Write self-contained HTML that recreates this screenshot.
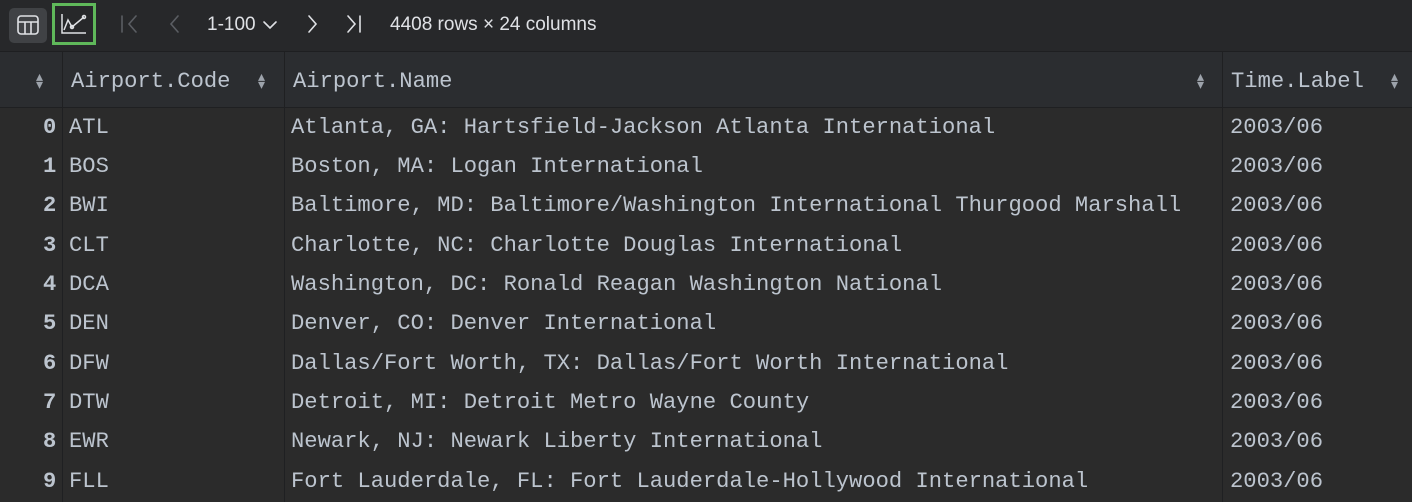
<!DOCTYPE html>
<html><head><style>
body{margin:0;width:1412px;height:502px;overflow:hidden;background:#2b2b2b;font-family:"Liberation Mono",monospace;color:#bcc4ce}
.tb{position:absolute;left:0;top:0;width:1412px;height:51px;background:#27282a;border-bottom:1px solid #1e1f21}
.tt{position:absolute;font-family:"Liberation Sans",sans-serif;font-size:19px;color:#dfe1e5;top:14px}
.hd{position:absolute;top:52px;left:0;width:1412px;height:55px;background:#2b2d30;border-bottom:1px solid #1f2022}
.vl{position:absolute;width:1px;background:#1f2022;top:52px;height:450px}
.t{position:absolute;font-size:22.15px;white-space:pre;line-height:24px}
.s{position:absolute;font-size:14px;color:#9da3ab;font-family:"DejaVu Sans",sans-serif;line-height:8px}
</style></head><body>
<div class="tb"></div>
<div style="position:absolute;left:9px;top:8px;width:38px;height:35px;border-radius:5px;background:#404245"></div>
<svg style="position:absolute;left:16px;top:14px" width="24" height="22" viewBox="0 0 24 22" fill="none" stroke="#dfe1e5" stroke-width="1.6"><rect x="2" y="2" width="20" height="18" rx="3"/><line x1="2" y1="8" x2="22" y2="8"/><line x1="9" y1="8" x2="9" y2="20"/><line x1="15" y1="8" x2="15" y2="20"/></svg>
<div style="position:absolute;left:52px;top:3px;width:44px;height:42px;border:3px solid #5fb85a;box-sizing:border-box"></div>
<svg style="position:absolute;left:60px;top:12px" width="28" height="24" viewBox="0 0 28 24" fill="none" stroke="#dfe1e5" stroke-width="1.5"><path d="M2 2V21H26"/><path d="M4 18L8 8L12 15L18 10L24 5"/><circle cx="12" cy="15" r="1.5"/><circle cx="24" cy="5" r="1.5"/></svg>
<svg style="position:absolute;left:118px;top:12px" width="260" height="24" viewBox="0 0 260 24" fill="none" stroke-width="1.6" stroke-linecap="round"><path d="M4 4V20M18 4L11 12L18 20" stroke="#5b5e63"/><path d="M60 4L53 12L60 20" stroke="#5b5e63"/><path d="M146 10L152 16L158 10" stroke="#dfe1e5"/><path d="M191 4L198 12L191 20" stroke="#dfe1e5"/><path d="M230 4L237 12L230 20M242 4V20" stroke="#dfe1e5"/></svg>
<div class="tt" style="left:207px">1-100</div>
<div class="tt" style="left:390px">4408 rows × 24 columns</div>
<div class="hd"></div>
<div class="vl" style="left:62px"></div><div class="vl" style="left:284px"></div><div class="vl" style="left:1222px"></div>
<div class="s" style="left:36px;top:73px">▴<br>▾</div>
<div class="t" style="left:71px;top:70px">Airport.Code</div>
<div class="s" style="left:258px;top:73px">▴<br>▾</div>
<div class="t" style="left:293px;top:70px">Airport.Name</div>
<div class="s" style="left:1197px;top:73px">▴<br>▾</div>
<div class="t" style="left:1231px;top:70px">Time.Label</div>
<div class="s" style="left:1391px;top:73px">▴<br>▾</div>
<div class="t" style="left:43px;top:116px;font-weight:bold">0</div><div class="t" style="left:69px;top:116px">ATL</div><div class="t" style="left:291px;top:116px">Atlanta, GA: Hartsfield-Jackson Atlanta International</div><div class="t" style="left:1230px;top:116px">2003/06</div>
<div class="t" style="left:43px;top:155px;font-weight:bold">1</div><div class="t" style="left:69px;top:155px">BOS</div><div class="t" style="left:291px;top:155px">Boston, MA: Logan International</div><div class="t" style="left:1230px;top:155px">2003/06</div>
<div class="t" style="left:43px;top:194px;font-weight:bold">2</div><div class="t" style="left:69px;top:194px">BWI</div><div class="t" style="left:291px;top:194px">Baltimore, MD: Baltimore/Washington International Thurgood Marshall</div><div class="t" style="left:1230px;top:194px">2003/06</div>
<div class="t" style="left:43px;top:234px;font-weight:bold">3</div><div class="t" style="left:69px;top:234px">CLT</div><div class="t" style="left:291px;top:234px">Charlotte, NC: Charlotte Douglas International</div><div class="t" style="left:1230px;top:234px">2003/06</div>
<div class="t" style="left:43px;top:273px;font-weight:bold">4</div><div class="t" style="left:69px;top:273px">DCA</div><div class="t" style="left:291px;top:273px">Washington, DC: Ronald Reagan Washington National</div><div class="t" style="left:1230px;top:273px">2003/06</div>
<div class="t" style="left:43px;top:312px;font-weight:bold">5</div><div class="t" style="left:69px;top:312px">DEN</div><div class="t" style="left:291px;top:312px">Denver, CO: Denver International</div><div class="t" style="left:1230px;top:312px">2003/06</div>
<div class="t" style="left:43px;top:352px;font-weight:bold">6</div><div class="t" style="left:69px;top:352px">DFW</div><div class="t" style="left:291px;top:352px">Dallas/Fort Worth, TX: Dallas/Fort Worth International</div><div class="t" style="left:1230px;top:352px">2003/06</div>
<div class="t" style="left:43px;top:391px;font-weight:bold">7</div><div class="t" style="left:69px;top:391px">DTW</div><div class="t" style="left:291px;top:391px">Detroit, MI: Detroit Metro Wayne County</div><div class="t" style="left:1230px;top:391px">2003/06</div>
<div class="t" style="left:43px;top:430px;font-weight:bold">8</div><div class="t" style="left:69px;top:430px">EWR</div><div class="t" style="left:291px;top:430px">Newark, NJ: Newark Liberty International</div><div class="t" style="left:1230px;top:430px">2003/06</div>
<div class="t" style="left:43px;top:470px;font-weight:bold">9</div><div class="t" style="left:69px;top:470px">FLL</div><div class="t" style="left:291px;top:470px">Fort Lauderdale, FL: Fort Lauderdale-Hollywood International</div><div class="t" style="left:1230px;top:470px">2003/06</div>
</body></html>
